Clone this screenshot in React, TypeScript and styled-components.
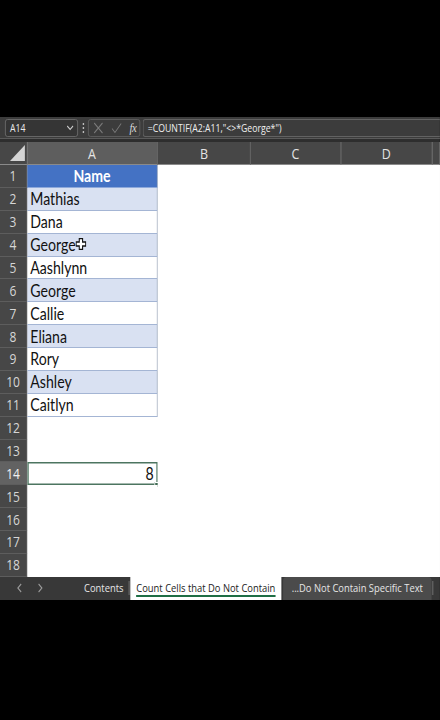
import React from 'react';
import styled, { createGlobalStyle, css } from 'styled-components';

const SCALE = 0.83;
const LOGICAL_W = 530;

const Global = createGlobalStyle`
  html, body { margin: 0; padding: 0; background: #000; }
  body { width: 440px; height: 720px; overflow: hidden; }
  #root { width: 440px; height: 720px; }
`;

const Viewport = styled.div`
  width: 440px;
  height: 720px;
  background: #000;
  overflow: hidden;
`;

const Stage = styled.div`
  width: ${LOGICAL_W}px;
  height: 720px;
  transform: scaleX(${SCALE});
  transform-origin: 0 0;
  display: flex;
  flex-direction: column;
`;

const TopSpace = styled.div`
  flex: none;
  height: 117px;
  background: #000;
`;

const BottomSpace = styled.div`
  flex: 1;
  background: #000;
`;

/* ---------- formula bar ---------- */
const FormulaBar = styled.div`
  flex: none;
  height: 22px;
  box-sizing: border-box;
  background: #3c3c3c;
  border-bottom: 1px solid #5a5a5a;
  display: flex;
  align-items: center;
  padding-left: 6px;
`;

const NameBox = styled.div`
  width: 88px;
  height: 18px;
  box-sizing: border-box;
  border: 1px solid #6a6a6a;
  border-radius: 3px;
  background: #353535;
  display: flex;
  align-items: center;
  justify-content: space-between;
  padding: 0 4px 0 5px;
  font-family: 'Open Sans', 'Noto Sans', sans-serif;
  font-size: 10.5px;
  color: #ececec;
`;

const Dots = styled.div`
  width: 12px;
  display: flex;
  justify-content: center;
`;

const ActionBox = styled.div`
  width: 63px;
  height: 18px;
  box-sizing: border-box;
  border: 1px solid #5e5e5e;
  border-radius: 3px;
  display: flex;
  align-items: center;
  padding-left: 5px;
  gap: 9px;
`;

const Fx = styled.span`
  font-family: 'Liberation Serif', serif;
  font-style: italic;
  font-size: 13px;
  color: #d8d8d8;
  letter-spacing: -0.5px;
`;

const FormulaInput = styled.div`
  flex: 1;
  height: 18px;
  margin-left: 3px;
  box-sizing: border-box;
  border: 1px solid #626262;
  border-right: none;
  border-radius: 3px 0 0 3px;
  display: flex;
  align-items: center;
  padding-left: 5px;
  font-family: 'Open Sans', 'Noto Sans', sans-serif;
  font-size: 10.5px;
  color: #f0f0f0;
  white-space: nowrap;
`;

const BarGap = styled.div`
  flex: none;
  height: 3px;
  background: #2e2e2e;
`;

/* ---------- grid ---------- */
const Grid = styled.div`
  flex: none;
  display: grid;
  grid-template-columns: 32.5px 157.7px 112px 108.4px 110.8px 1fr;
  grid-template-rows: 23px repeat(18, 22.89px);
  background: #fff;
`;

const Corner = styled.div`
  background: #474747;
  border-right: 1px solid #5c5c5c;
  border-bottom: 1px solid #8a8a8a;
  display: flex;
  align-items: flex-end;
  justify-content: flex-end;
  padding: 0 2px 3px 0;
  box-sizing: border-box;
`;

const ColHeader = styled.div<{ $active?: boolean }>`
  background: ${p => (p.$active ? '#5e5e5e' : '#474747')};
  border-right: 1px solid #666;
  border-bottom: 1px solid #8a8a8a;
  box-sizing: border-box;
  display: flex;
  align-items: center;
  justify-content: center;
  font-family: 'Open Sans', 'Noto Sans', sans-serif;
  font-size: 15px;
  color: #e4e4e4;
`;

const RowHeader = styled.div<{ $active?: boolean }>`
  background: ${p => (p.$active ? '#626262' : '#474747')};
  border-bottom: 1px solid #5d5d5d;
  border-right: 1px solid #6a6a6a;
  box-sizing: border-box;
  display: flex;
  align-items: center;
  justify-content: center;
  font-family: 'Open Sans', 'Noto Sans', sans-serif;
  font-size: 14.5px;
  color: ${p => (p.$active ? '#f2f2f2' : '#d6d6d6')};
`;

type CellKind = 'head' | 'band' | 'plain' | 'empty' | 'selected';

const Cell = styled.div<{ $kind: CellKind }>`
  position: relative;
  box-sizing: border-box;
  display: flex;
  align-items: center;
  padding: 0 4px;
  font-family: Lato, 'Liberation Sans', sans-serif;
  font-size: 17px;
  color: #111;
  white-space: nowrap;
  ${p =>
    p.$kind === 'head' &&
    css`
      background: #4472c4;
      color: #fff;
      font-weight: 700;
      justify-content: center;
      border-right: 1px solid #7e8ea8;
      border-bottom: 1px solid #8ea9db;
    `}
  ${p =>
    p.$kind === 'band' &&
    css`
      background: #d9e1f2;
      border-right: 1px solid #8e9bb0;
      border-bottom: 1px solid #a4b5d4;
    `}
  ${p =>
    p.$kind === 'plain' &&
    css`
      background: #fff;
      border-right: 1px solid #8e9bb0;
      border-bottom: 1px solid #a4b5d4;
    `}
  ${p =>
    p.$kind === 'empty' &&
    css`
      background: #fff;
    `}
  ${p =>
    p.$kind === 'selected' &&
    css`
      background: #fff;
      justify-content: flex-end;
      padding-right: 5px;
      box-shadow: inset 0 0 0 1.6px #4d7560;
      &::after {
        content: '';
        position: absolute;
        right: -3px;
        bottom: -3px;
        width: 5px;
        height: 4px;
        background: #3e6a52;
        border: 1px solid #fff;
      }
    `}
`;

const Pointer = styled.svg`
  position: absolute;
  left: 58px;
  top: 4px;
`;

/* ---------- sheet tabs ---------- */
const TabBar = styled.div`
  flex: none;
  height: 23px;
  background: #383838;
  display: flex;
  align-items: stretch;
  font-family: 'Open Sans', 'Noto Sans', sans-serif;
  font-size: 11.3px;
`;

const NavArrows = styled.div`
  width: 96px;
  display: flex;
  align-items: center;
  padding-left: 20px;
  gap: 18px;
  box-sizing: border-box;
`;

const Tab = styled.div<{ $active?: boolean; $shade?: boolean }>`
  display: flex;
  align-items: center;
  justify-content: center;
  box-sizing: border-box;
  white-space: nowrap;
  color: #e6e6e6;
  ${p =>
    p.$active &&
    css`
      background: #fff;
      color: #1b1b1b;
      margin-top: -2px;
    `}
  ${p =>
    p.$shade &&
    css`
      background: #4b4b4b;
      border-radius: 4px 4px 0 0;
    `}
`;

const TabLabel = styled.span<{ $active?: boolean }>`
  padding-bottom: 1px;
  ${p =>
    p.$active &&
    css`
      border-bottom: 2px solid #1f6e45;
      padding-bottom: 0;
      margin-top: 2px;
    `}
`;

const TabSep = styled.div`
  width: 1px;
  align-self: center;
  height: 14px;
  background: #7a7a7a;
  margin: 0 1px;
`;

const Chevron = ({ dir }: { dir: 'l' | 'r' }) => (
  <svg width="7" height="10" viewBox="0 0 7 10">
    <path
      d={dir === 'l' ? 'M5.5 1 L1.5 5 L5.5 9' : 'M1.5 1 L5.5 5 L1.5 9'}
      fill="none"
      stroke="#9c9c9c"
      strokeWidth="1.2"
    />
  </svg>
);

const names = ['Mathias', 'Dana', 'George', 'Aashlynn', 'George', 'Callie', 'Eliana', 'Rory', 'Ashley', 'Caitlyn'];

export default function App() {
  const rows: React.ReactNode[] = [];
  for (let r = 1; r <= 18; r++) {
    let kind: CellKind = 'empty';
    let content: React.ReactNode = null;
    if (r === 1) {
      kind = 'head';
      content = 'Name';
    } else if (r <= 11) {
      kind = r % 2 === 0 ? 'band' : 'plain';
      content = names[r - 2];
    } else if (r === 14) {
      kind = 'selected';
      content = '8';
    }
    rows.push(
      <React.Fragment key={r}>
        <RowHeader $active={r === 14}>{r}</RowHeader>
        <Cell $kind={kind}>
          {content}
          {r === 4 && (
            <Pointer width="13" height="12" viewBox="0 0 13 12">
              <path
                d="M4.5 0.7 H8.5 V4 H12.3 V8 H8.5 V11.3 H4.5 V8 H0.7 V4 H4.5 Z"
                fill="#fff"
                stroke="#111"
                strokeWidth="1.3"
              />
            </Pointer>
          )}
        </Cell>
        <Cell $kind="empty" />
        <Cell $kind="empty" />
        <Cell $kind="empty" />
        <Cell $kind="empty" />
      </React.Fragment>
    );
  }

  return (
    <Viewport>
      <Global />
      <Stage>
        <TopSpace />
        <FormulaBar>
          <NameBox>
            <span>A14</span>
            <svg width="9" height="6" viewBox="0 0 9 6">
              <path d="M1 1 L4.5 4.5 L8 1" fill="none" stroke="#cfcfcf" strokeWidth="1.1" />
            </svg>
          </NameBox>
          <Dots>
            <svg width="3" height="12" viewBox="0 0 3 12">
              <circle cx="1.5" cy="2" r="1.1" fill="#c8c8c8" />
              <circle cx="1.5" cy="6" r="1.1" fill="#c8c8c8" />
              <circle cx="1.5" cy="10" r="1.1" fill="#c8c8c8" />
            </svg>
          </Dots>
          <ActionBox>
            <svg width="13" height="12" viewBox="0 0 13 12">
              <path d="M1.5 1 L11.5 11 M11.5 1 L1.5 11" stroke="#7a7a7a" strokeWidth="1.1" />
            </svg>
            <svg width="13" height="12" viewBox="0 0 13 12">
              <path d="M1 6.5 L4.5 10.5 L12 1.5" fill="none" stroke="#7a7a7a" strokeWidth="1.1" />
            </svg>
            <Fx>fx</Fx>
          </ActionBox>
          <FormulaInput>=COUNTIF(A2:A11,"&lt;&gt;*George*")</FormulaInput>
        </FormulaBar>
        <BarGap />
        <Grid>
          <Corner>
            <svg width="18" height="16" viewBox="0 0 18 16">
              <path d="M18 0 L18 16 L0 16 Z" fill="#d4d4d4" />
            </svg>
          </Corner>
          <ColHeader $active>A</ColHeader>
          <ColHeader>B</ColHeader>
          <ColHeader>C</ColHeader>
          <ColHeader>D</ColHeader>
          <ColHeader />
          {rows}
        </Grid>
        <TabBar>
          <NavArrows>
            <Chevron dir="l" />
            <Chevron dir="r" />
          </NavArrows>
          <Tab style={{ width: 58 }}>
            <TabLabel>Contents</TabLabel>
          </Tab>
          <TabSep />
          <Tab $active style={{ width: 182 }}>
            <TabLabel $active>Count Cells that Do Not Contain</TabLabel>
          </Tab>
          <Tab $shade style={{ width: 179, marginLeft: 2 }}>
            <TabLabel>...Do Not Contain Specific Text</TabLabel>
          </Tab>
          <TabSep />
        </TabBar>
        <BottomSpace />
      </Stage>
    </Viewport>
  );
}
